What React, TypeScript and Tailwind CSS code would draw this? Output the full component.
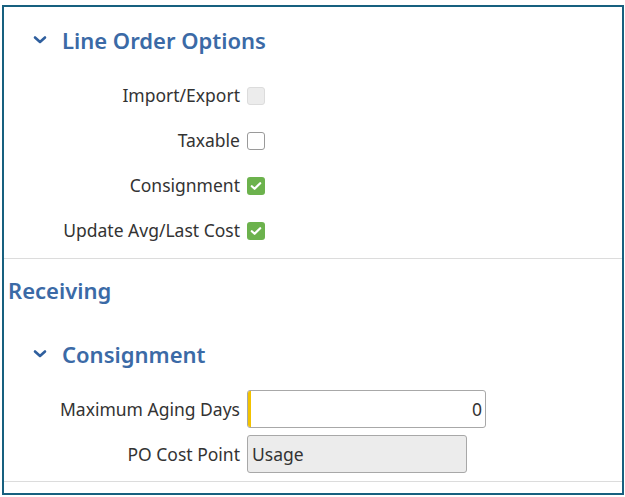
import React from "react";

const Chevron = () => (
  <svg width="14" height="10" viewBox="0 0 14 10" className="shrink-0">
    <path d="M2 2.5 L7 7 L12 2.5" fill="none" stroke="#2f5f9e" strokeWidth="2.6" strokeLinecap="round" strokeLinejoin="round" />
  </svg>
);

const Check = ({ state }: { state: "disabled" | "empty" | "checked" }) => {
  if (state === "checked")
    return (
      <div className="w-[18px] h-[18px] rounded-[3px] bg-[#6cb24d] flex items-center justify-center">
        <svg width="12" height="10" viewBox="0 0 12 10">
          <path d="M1.8 5.2 L4.6 7.8 L10.2 2.2" fill="none" stroke="#fff" strokeWidth="2.2" strokeLinecap="round" strokeLinejoin="round" />
        </svg>
      </div>
    );
  if (state === "disabled")
    return <div className="w-[18px] h-[18px] rounded-[3px] bg-[#ececec] border border-[#dcdcdc]" />;
  return <div className="w-[18px] h-[18px] rounded-[3px] bg-white border border-[#9a9a9a]" />;
};

const CheckRow = ({ label, state }: { label: string; state: "disabled" | "empty" | "checked" }) => (
  <div className="flex items-center h-[45px]">
    <div className="w-[236px] text-right text-[17.5px] text-[#333]">{label}</div>
    <div className="ml-[7px]">
      <Check state={state} />
    </div>
  </div>
);

export default function App() {
  return (
    <div className="w-[625px] h-[497px] bg-white pt-[5px] pl-[2px]" style={{ fontFamily: '"Noto Sans", "Open Sans", sans-serif' }}>
      <div className="w-[622px] h-[490px] border-2 border-[#17607f] flex flex-col overflow-hidden">
        <div className="flex items-center h-[66px] pl-[29px]">
          <Chevron />
          <span className="ml-[15px] text-[22px] font-semibold text-[#3b6aa6]">Line Order Options</span>
        </div>
        <div className="flex flex-col">
          <CheckRow label="Import/Export" state="disabled" />
          <CheckRow label="Taxable" state="empty" />
          <CheckRow label="Consignment" state="checked" />
          <CheckRow label="Update Avg/Last Cost" state="checked" />
        </div>
        <div className="h-[5px]" />
        <div className="border-t border-[#dcdcdc]" />
        <div className="flex items-center h-[62px] pl-[4px]">
          <span className="text-[22px] font-semibold text-[#3b6aa6]">Receiving</span>
        </div>
        <div className="flex items-center h-[66px] pl-[29px]">
          <Chevron />
          <span className="ml-[15px] text-[22px] font-semibold text-[#3b6aa6]">Consignment</span>
        </div>
        <div className="flex items-center mt-[3px]">
          <div className="w-[236px] text-right text-[17.5px] text-[#333]">Maximum Aging Days</div>
          <div className="ml-[7px] w-[239px] h-[38px] border border-[#a8a8a8] rounded-[3px] bg-white flex items-center justify-end pr-[3px] relative overflow-hidden">
            <div className="absolute left-0 top-0 bottom-0 w-[3px] bg-[#f2c200]" />
            <span className="text-[17.5px] text-[#333]">0</span>
          </div>
        </div>
        <div className="flex items-center mt-[7px]">
          <div className="w-[236px] text-right text-[17.5px] text-[#333]">PO Cost Point</div>
          <div className="ml-[7px] w-[220px] h-[38px] border border-[#a8a8a8] rounded-[3px] bg-[#ececec] flex items-center pl-[4px]">
            <span className="text-[17.5px] text-[#333]">Usage</span>
          </div>
        </div>
        <div className="mt-[8px] border-t border-[#dcdcdc]" />
      </div>
    </div>
  );
}
